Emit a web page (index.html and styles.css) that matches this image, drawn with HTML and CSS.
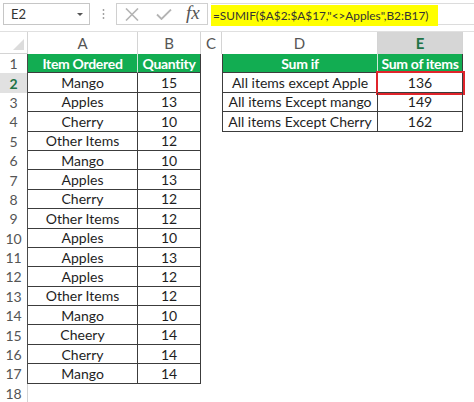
FILE: index.html
```html
<!DOCTYPE html>
<html lang="en">
<head>
  <meta charset="UTF-8">
  <meta name="viewport" content="width=device-width, initial-scale=1.0">
  <link rel="stylesheet" href="styles.css">
  <title>SUMIF Except</title>
</head>
<body>
  <div class="formula-bar">
    <div class="name-box">
      <span>E2</span>
      <span class="arrow"></span>
    </div>
    <div class="dots">
      <svg width="3" height="12" viewBox="0 0 3 12"><circle cx="1.5" cy="2" r="0.9" fill="#9a9a9a"/><circle cx="1.5" cy="6" r="0.9" fill="#9a9a9a"/><circle cx="1.5" cy="10" r="0.9" fill="#9a9a9a"/></svg>
    </div>
    <div class="fx-box">
      <svg class="icon-x" width="14" height="13" viewBox="0 0 14 13"><path d="M1 0.5 L13 12.5 M13 0.5 L1 12.5" stroke="#b4b4b4" stroke-width="1.6" fill="none"/></svg>
      <svg class="icon-check" width="16" height="11" viewBox="0 0 16 11"><path d="M1 5.5 L5.5 10 L15 0.5" stroke="#b4b4b4" stroke-width="1.8" fill="none"/></svg>
      <span class="fx">fx</span>
    </div>
    <div class="formula-input">
      <span class="formula">=SUMIF($A$2:$A$17,"&lt;&gt;Apples",B2:B17)</span>
    </div>
  </div>

  <div class="sheet" id="sheet"></div>

  <script>
    const items = [
      ["Mango", 15], ["Apples", 13], ["Cherry", 10], ["Other Items", 12],
      ["Mango", 10], ["Apples", 13], ["Cherry", 12], ["Other Items", 12],
      ["Apples", 10], ["Apples", 13], ["Apples", 12], ["Other Items", 12],
      ["Mango", 10], ["Cheery", 14], ["Cherry", 14], ["Mango", 14]
    ];
    const sums = [
      ["All items except Apple", 136],
      ["All items Except mango", 149],
      ["All items Except Cherry", 162]
    ];

    const sheet = document.getElementById("sheet");

    function cell(text, cls) {
      const div = document.createElement("div");
      div.className = "cell " + (cls || "");
      div.textContent = text;
      sheet.appendChild(div);
      return div;
    }

    // column headers
    cell("", "corner");
    ["A", "B", "C", "D", "E"].forEach(letter => {
      cell(letter, "col-head" + (letter === "E" ? " active" : ""));
    });
    cell("", "col-head rest");

    for (let r = 1; r <= 18; r++) {
      const inTable = r <= 17;
      cell(r, "row-head" + (r === 2 ? " active" : "") + (inTable ? " edge" : ""));

      if (r === 1) {
        cell("Item Ordered", "t head");
        cell("Quantity", "t head last");
      } else if (inTable) {
        cell(items[r - 2][0], "t");
        cell(items[r - 2][1], "t");
      } else {
        cell("", "");
        cell("", "");
      }

      cell("", "");

      if (r === 1) {
        cell("Sum if", "t head first");
        cell("Sum of items", "t head last");
      } else if (r <= 4) {
        cell(sums[r - 2][0], "t first");
        cell(sums[r - 2][1], "t" + (r === 2 ? " selected" : ""));
      } else {
        cell("", "");
        cell("", "");
      }

      cell("", "");
    }
  </script>
</body>
</html>
```

FILE: styles.css
```css
body {
  margin: 0;
  background: #fff;
  font-family: Lato, "Open Sans", sans-serif;
  color: #1e1e1e;
}

/* formula bar */
.formula-bar {
  display: flex;
  align-items: flex-start;
  height: 31px;
  padding: 3px 0 0 3px;
  box-sizing: border-box;
}

.name-box {
  width: 87px;
  height: 22px;
  box-sizing: border-box;
  border: 1px solid #c6c6c6;
  display: flex;
  align-items: center;
  justify-content: space-between;
  padding: 0 6px 0 7px;
  font-size: 13px;
  color: #333;
}

.arrow {
  width: 0;
  height: 0;
  border-left: 3px solid transparent;
  border-right: 3px solid transparent;
  border-top: 3px solid #555;
}

.dots {
  width: 26px;
  height: 22px;
  display: flex;
  align-items: center;
  justify-content: center;
}

.fx-box {
  width: 92px;
  height: 22px;
  box-sizing: border-box;
  border: 1px solid #d0d0d0;
  display: flex;
  align-items: center;
  padding-left: 8px;
}

.icon-x {
  margin-right: 17px;
}

.icon-check {
  margin-right: 14px;
}

.fx {
  font-family: "Liberation Serif", serif;
  font-style: italic;
  font-size: 19px;
  color: #555;
  margin-top: -2px;
}

.formula-input {
  flex: 1;
  height: 22px;
  margin-left: 3px;
  border-top: 1px solid #dcdcdc;
  border-bottom: 1px solid #dcdcdc;
  box-sizing: border-box;
}

.formula {
  display: inline-block;
  height: 21px;
  line-height: 21px;
  width: 227px;
  box-sizing: border-box;
  padding-left: 2px;
  background: #ffff00;
  font-size: 11.8px;
  color: #333;
  margin-top: -1px;
  white-space: nowrap;
}

/* sheet grid */
.sheet {
  display: grid;
  grid-template-columns: 28px 110px 63px 21px 156px 85px 1fr;
  grid-template-rows: 22px repeat(18, 19.4px);
  border-top: 1px solid #e0e0e0;
}

.cell {
  box-sizing: border-box;
  display: flex;
  align-items: center;
  justify-content: center;
  font-size: 14px;
  white-space: nowrap;
  overflow: hidden;
}

.corner {
  border-right: 1px solid #d4d4d4;
  border-bottom: 1px solid #d4d4d4;
  position: relative;
}

.corner::after {
  content: "";
  position: absolute;
  right: 3px;
  bottom: 3px;
  border-left: 11px solid transparent;
  border-bottom: 11px solid #dcdcdc;
}

.col-head {
  border-right: 1px solid #d4d4d4;
  color: #555;
  font-size: 15px;
}

.col-head.rest {
  border-right: none;
}

.col-head.active {
  background: #d6d6d6;
  color: #217346;
  font-weight: 700;
}

.row-head {
  border-right: 1px solid #d4d4d4;
  color: #555;
  font-size: 14px;
}

.row-head.edge {
  border-right-color: #4a4a4a;
}

.row-head.active {
  background: #e1e1e1;
  color: #217346;
  font-weight: 700;
}

/* bordered tables */
.t {
  border-right: 1px solid #3c3c3c;
  border-bottom: 1px solid #3c3c3c;
}

.t.first {
  border-left: 1px solid #3c3c3c;
}

.t.head {
  background: #12ad52;
  color: #fff;
  font-weight: 700;
  font-size: 14px;
  letter-spacing: -0.3px;
  border-right-color: #cfe9d8;
}

.t.head.last {
  border-right-color: #3c3c3c;
}

.t.selected {
  outline: 2px solid #e0242b;
  outline-offset: 0;
}
```
